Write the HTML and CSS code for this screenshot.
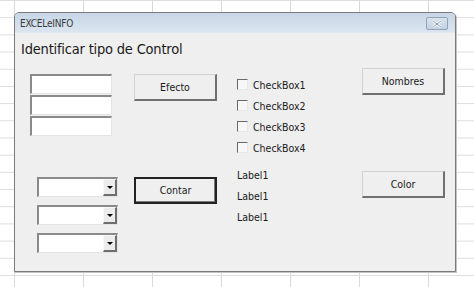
FILE: index.html
```html
<!DOCTYPE html>
<html>
<head>
<meta charset="utf-8">
<link rel="stylesheet" href="styles.css">
</head>
<body>
<div class="sheet">
  <div class="window">
    <div class="titlebar">
      <span class="title">EXCELeINFO</span>
      <span class="close">
        <svg width="10" height="8" viewBox="0 0 10 8"><path d="M1 1 L9 7 M9 1 L1 7" stroke="#ffffff" stroke-width="2.2" fill="none"/><path d="M1 1 L9 7 M9 1 L1 7" stroke="#6d7f96" stroke-width="0.8" fill="none"/></svg>
      </span>
    </div>
    <div class="form">
      <div class="heading">Identificar tipo de Control</div>
      <div class="controls">
        <div class="cell c-text">
          <div class="textbox"></div>
          <div class="textbox"></div>
          <div class="textbox"></div>
        </div>
        <div class="cell c-efecto"><div class="btn">Efecto</div></div>
        <div class="cell c-checks">
          <div class="check"><span class="box"></span>CheckBox1</div>
          <div class="check"><span class="box"></span>CheckBox2</div>
          <div class="check"><span class="box"></span>CheckBox3</div>
          <div class="check"><span class="box"></span>CheckBox4</div>
        </div>
        <div class="cell c-nombres"><div class="btn">Nombres</div></div>

        <div class="cell c-combos">
          <div class="combo"><span class="drop"><span class="arrow"></span></span></div>
          <div class="combo"><span class="drop"><span class="arrow"></span></span></div>
          <div class="combo"><span class="drop"><span class="arrow"></span></span></div>
        </div>
        <div class="cell c-contar"><div class="btn default">Contar</div></div>
        <div class="cell c-labels">
          <div class="label">Label1</div>
          <div class="label">Label1</div>
          <div class="label">Label1</div>
        </div>
        <div class="cell c-color"><div class="btn">Color</div></div>
      </div>
    </div>
  </div>
</div>
</body>
</html>
```
FILE: styles.css
```css
html, body {
  margin: 0;
  padding: 0;
}
body {
  width: 474px;
  height: 287px;
  overflow: hidden;
  font-family: "DejaVu Sans", "Liberation Sans", sans-serif;
}
.sheet {
  width: 474px;
  height: 287px;
  background-color: #ffffff;
  background-image:
    linear-gradient(to right, #d9d9d9 1px, transparent 1px),
    linear-gradient(to bottom, #dcdcdc 1px, transparent 1px);
  background-size: 69px 17.2px, 69px 17.2px;
  background-position: 14px 0, 0 0;
  padding: 12px 0 0 14px;
  box-sizing: border-box;
}
.window {
  width: 442px;
  height: 260px;
  box-sizing: border-box;
  border: 1px solid #7a7a7a;
  border-radius: 5px 5px 0 0;
  background: #efefef;
  display: flex;
  flex-direction: column;
  overflow: hidden;
  box-shadow: 1px 1px 0 #c4c4c4;
}
.titlebar {
  height: 19px;
  flex: none;
  background: linear-gradient(to bottom, #c7d6e6, #dbe5f0);
  display: flex;
  align-items: center;
  justify-content: space-between;
  padding: 0 7px 0 5px;
  border-bottom: 1px solid #e3e9f0;
}
.title {
  font-family: "DejaVu Sans Condensed", "DejaVu Sans", sans-serif;
  font-size: 10px;
  color: #3a3a3a;
  letter-spacing: -0.2px;
  margin-top: 1px;
}
.close {
  width: 20px;
  height: 11px;
  margin-top: 2px;
  border: 1px solid #8fa1b6;
  border-radius: 2px;
  background: linear-gradient(to bottom, #d9e3ee, #c3d1e0);
  display: flex;
  align-items: center;
  justify-content: center;
}
.form {
  flex: 1;
  padding: 7px 0 0 0;
}
.heading {
  font-family: "DejaVu Sans Condensed", "DejaVu Sans", sans-serif;
  font-size: 14.5px;
  line-height: 18px;
  height: 18px;
  color: #1a1a1a;
  padding-left: 6px;
  letter-spacing: -0.2px;
}
.controls {
  margin-top: 10px;
  padding-left: 15px;
  display: grid;
  grid-template-columns: 104px 103px 125px 83px;
  grid-template-rows: 90px auto;
  row-gap: 7px;
  font-family: "DejaVu Sans Condensed", "DejaVu Sans", sans-serif;
  font-size: 10.5px;
  color: #1a1a1a;
}
.cell {
  display: flex;
  flex-direction: column;
  align-items: flex-start;
}
.c-text { padding-top: 6px; gap: 1px; }
.c-efecto { padding-top: 6px; }
.c-checks { padding-top: 6px; }
.c-nombres { padding-top: 0; }
.c-combos { padding-top: 12px; padding-left: 7px; gap: 8px; }
.c-contar { padding-top: 12px; }
.c-labels { padding-top: 0; }
.c-color { padding-top: 6px; }

.textbox {
  width: 82px;
  height: 20px;
  box-sizing: border-box;
  background: #ffffff;
  border-top: 2px solid #8a8a8a;
  border-left: 2px solid #8a8a8a;
  border-right: 1px solid #e4e4e4;
  border-bottom: 1px solid #e4e4e4;
}
.combo {
  width: 81px;
  height: 20px;
  box-sizing: border-box;
  background: #ffffff;
  border-top: 2px solid #8a8a8a;
  border-left: 2px solid #8a8a8a;
  border-right: 1px solid #e4e4e4;
  border-bottom: 1px solid #e4e4e4;
  display: flex;
  justify-content: flex-end;
}
.drop {
  width: 14px;
  height: 100%;
  box-sizing: border-box;
  background: #ececec;
  border-top: 1px solid #f8f8f8;
  border-left: 1px solid #f8f8f8;
  border-right: 2px solid #6e6e6e;
  border-bottom: 2px solid #6e6e6e;
  display: flex;
  align-items: center;
  justify-content: center;
}
.arrow {
  width: 0;
  height: 0;
  border-left: 3px solid transparent;
  border-right: 3px solid transparent;
  border-top: 3px solid #000000;
  margin-top: 1px;
}
.btn {
  width: 83px;
  height: 27px;
  box-sizing: border-box;
  background: #efefef;
  border-top: 1px solid #d2d2d2;
  border-left: 1px solid #d2d2d2;
  border-right: 2px solid #707070;
  border-bottom: 2px solid #707070;
  display: flex;
  align-items: center;
  justify-content: center;
  padding-bottom: 1px;
}
.btn.default {
  border: 2px solid #222222;
  box-shadow: inset -1px -1px 0 #7a7a7a;
}
.check {
  height: 21px;
  display: flex;
  align-items: center;
  white-space: nowrap;
}
.box {
  width: 11px;
  height: 11px;
  box-sizing: border-box;
  background: #f7f7f7;
  border-top: 1px solid #6a6a6a;
  border-left: 1px solid #6a6a6a;
  border-right: 1px solid #e8e8e8;
  border-bottom: 1px solid #e8e8e8;
  margin-right: 5px;
}
.label {
  height: 21px;
  line-height: 21px;
}
```
